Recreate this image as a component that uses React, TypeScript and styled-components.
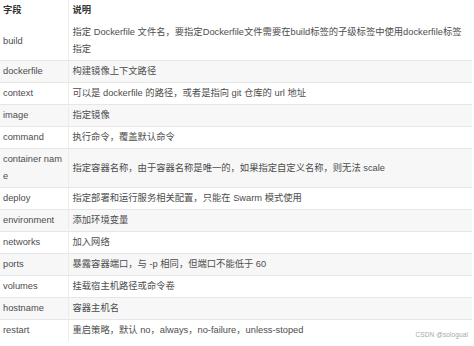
import * as React from 'react'
import styled, { createGlobalStyle } from 'styled-components'

const GlobalStyle = createGlobalStyle`
    html, body {
        margin: 0;
        padding: 0;
        background: #fff;
    }
    body {
        font-family: "Liberation Sans", Arial, "Noto Sans CJK SC", sans-serif;
    }
`

const Page = styled.div`
    position: relative;
    width: 474px;
    height: 346px;
    overflow: hidden;
`

const Table = styled.table`
    width: 472px;
    border-collapse: collapse;
    table-layout: fixed;
    font-size: 9.3px;
    line-height: 17px;
    color: #4d4d4d;
`

const Row = styled.tr<{ $shade?: boolean }>`
    background: ${(p) => (p.$shade ? '#f7f7f7' : '#fff')};
    border-top: 1px solid #e6e6e6;
    &:first-child {
        border-top: none;
    }
`

const HeadCell = styled.th`
    text-align: left;
    font-weight: bold;
    color: #333;
    padding: 2px 3px 3px;
    vertical-align: middle;
    border-right: 1px solid #ececec;
    &:last-child {
        border-right: none;
        padding-left: 4px;
    }
`

const KeyCell = styled.td`
    width: 62px;
    padding: 2px 3px;
    word-break: break-all;
    vertical-align: middle;
    border-right: 1px solid #ececec;
`

const DescCell = styled.td`
    padding: 2px 4px;
    vertical-align: middle;
`

const Watermark = styled.div`
    position: absolute;
    right: 6px;
    bottom: 8px;
    font-size: 6.5px;
    color: #a8a8a8;
    letter-spacing: 0.1px;
`

const rows: [string, React.ReactNode][] = [
    ['build', <>指定 Dockerfile 文件名，要指定Dockerfile文件需要在build标签的子级标签中使用dockerfile标签<br />指定</>],
    ['dockerfile', '构建镜像上下文路径'],
    ['context', '可以是 dockerfile 的路径，或者是指向 git 仓库的 url 地址'],
    ['image', '指定镜像'],
    ['command', '执行命令，覆盖默认命令'],
    ['container name', '指定容器名称，由于容器名称是唯一的，如果指定自定义名称，则无法 scale'],
    ['deploy', '指定部署和运行服务相关配置，只能在 Swarm 模式使用'],
    ['environment', '添加环境变量'],
    ['networks', '加入网络'],
    ['ports', '暴露容器端口，与 -p 相同，但端口不能低于 60'],
    ['volumes', '挂载宿主机路径或命令卷'],
    ['hostname', '容器主机名'],
    ['restart', '重启策略，默认 no，always，no-failure，unless-stoped'],
]

export default function App() {
    return (
        <Page>
            <GlobalStyle />
            <Table>
                <colgroup>
                    <col style={{ width: '68px' }} />
                    <col />
                </colgroup>
                <thead>
                    <Row>
                        <HeadCell>字段</HeadCell>
                        <HeadCell>说明</HeadCell>
                    </Row>
                </thead>
                <tbody>
                    {rows.map(([key, desc], i) => (
                        <Row key={key} $shade={i % 2 === 1}>
                            <KeyCell>{key}</KeyCell>
                            <DescCell>{desc}</DescCell>
                        </Row>
                    ))}
                </tbody>
            </Table>
            <Watermark>CSDN @sologual</Watermark>
        </Page>
    )
}
